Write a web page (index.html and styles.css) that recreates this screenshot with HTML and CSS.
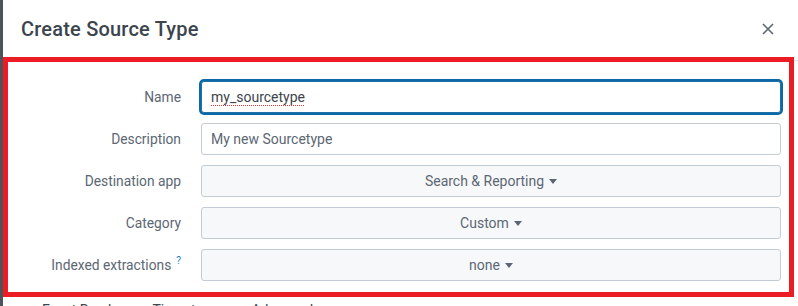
FILE: index.html
```html
<!DOCTYPE html>
<html lang="en">
<head>
<meta charset="utf-8">
<title>Create Source Type</title>
<link rel="stylesheet" href="styles.css">
</head>
<body>
<div class="page">
  <div class="modal">
    <div class="header">
      <h1 class="title">Create Source Type</h1>
      <button class="close" aria-label="Close">
        <svg width="12" height="12" viewBox="0 0 12 12"><path d="M1 1 L11 11 M11 1 L1 11" stroke="#5c6773" stroke-width="1.6" fill="none"/></svg>
      </button>
    </div>
    <div class="body">
      <div class="row">
        <div class="label">Name</div>
        <div class="field input focused"><span class="spell">my_sourcetype</span></div>
      </div>
      <div class="row">
        <div class="label">Description</div>
        <div class="field input">My new Sourcetype</div>
      </div>
      <div class="row">
        <div class="label">Destination app</div>
        <div class="field select">Search &amp; Reporting<span class="caret"></span></div>
      </div>
      <div class="row">
        <div class="label">Category</div>
        <div class="field select">Custom<span class="caret"></span></div>
      </div>
      <div class="row">
        <div class="label">Indexed extractions<sup class="help">?</sup></div>
        <div class="field select">none<span class="caret"></span></div>
      </div>
      <div class="tabs">
        <span class="tab t1">Event Breaks</span>
        <span class="tab t2">Timestamp</span>
        <span class="tab t3">Advanced</span>
      </div>
    </div>
  </div>
  <div class="highlight"></div>
</div>
</body>
</html>
```
FILE: styles.css
```css
* { box-sizing: border-box; }
html, body { margin: 0; padding: 0; background: #fff; }
body {
  font-family: "Roboto", "Liberation Sans", sans-serif;
  color: #3c444d;
  overflow: hidden;
  height: 306px;
}
.page {
  position: relative;
  height: 306px;
  border-left: 3px solid #4d535a;
}
.modal { background: #fff; }
.header {
  height: 61px;
  border-bottom: 1px solid #e1e6eb;
  display: flex;
  align-items: center;
  justify-content: space-between;
  padding: 0 24px 3px 18px;
}
.title {
  margin: 0;
  font-size: 20px;
  font-weight: 500;
  color: #3c444d;
  letter-spacing: 0.2px;
}
.close {
  border: 0;
  background: none;
  padding: 0;
  display: flex;
  width: 12px;
  height: 12px;
}
.body {
  padding: 20px 17px 0 0;
  display: flex;
  flex-direction: column;
  gap: 10px;
}
.row {
  display: flex;
  align-items: center;
  gap: 20px;
  height: 32px;
}
.label {
  width: 178px;
  text-align: right;
  font-size: 13.8px;
  color: #5c6773;
  white-space: nowrap;
}
.help {
  color: #1a7bc4;
  font-size: 10px;
  margin-left: 5px;
  vertical-align: 6px;
  line-height: 0;
}
.field {
  flex: 1;
  height: 32px;
  border: 1px solid #c3cbd4;
  border-radius: 3px;
  font-size: 14px;
  display: flex;
  align-items: center;
}
.input {
  background: #fff;
  padding: 0 9px;
  color: #5c6773;
}
.focused {
  border-color: #1f6fa8;
  box-shadow: 0 0 0 2px #0b6aa6;
  color: #3c444d;
}
.spell {
  text-decoration: underline dotted #e8333a;
  text-underline-offset: 3px;
  text-decoration-thickness: 1px;
}
.select {
  background: #f7f8fa;
  justify-content: center;
  color: #5c6773;
}
.caret {
  display: inline-block;
  width: 0;
  height: 0;
  border-left: 4px solid transparent;
  border-right: 4px solid transparent;
  border-top: 5px solid #5c6773;
  margin-left: 5px;
  margin-top: 1px;
}
.tabs {
  margin-top: 11px;
  display: flex;
  font-size: 14px;
  color: #3c444d;
  padding-left: 39px;
}
.tab { white-space: nowrap; }
.t2 { margin-left: 30px; }
.t3 { margin-left: 28px; }
.highlight {
  position: absolute;
  left: 0;
  top: 57px;
  width: 791px;
  height: 240px;
  border: 5px solid #ec1c24;
  pointer-events: none;
}
```
